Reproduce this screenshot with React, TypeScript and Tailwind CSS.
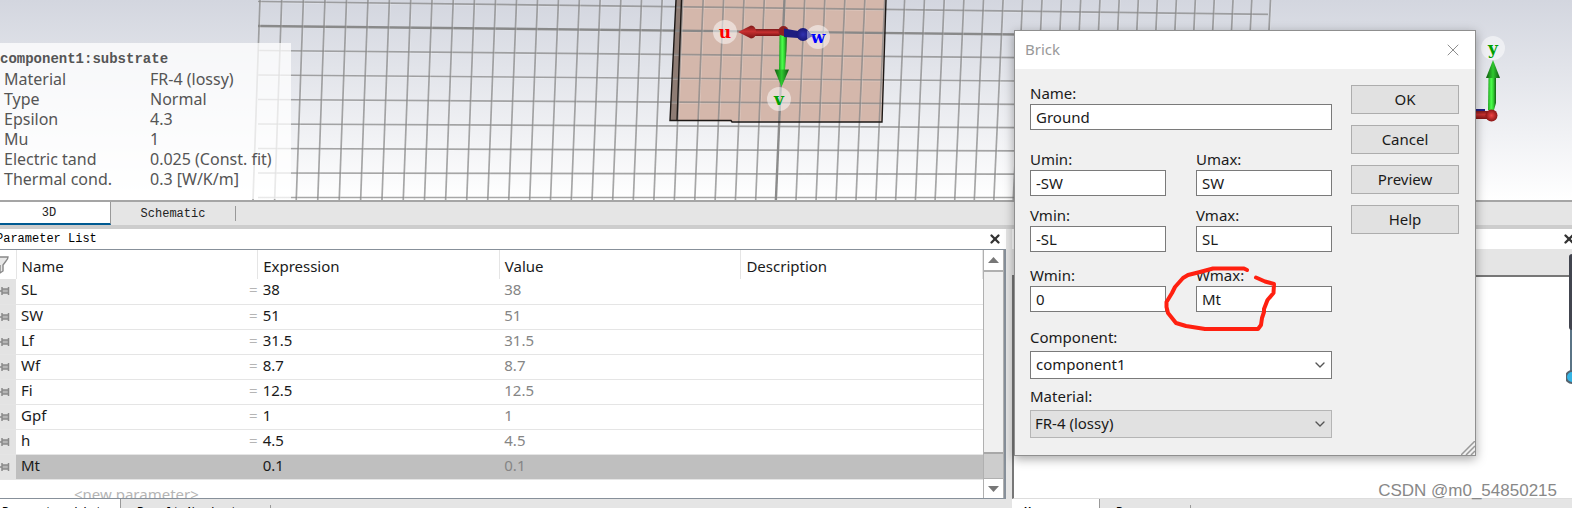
import { ChevronDown, X } from 'lucide-react';
import type { ReactNode } from 'react';

interface Parameter {
  name: string;
  value: string;
  selected?: boolean;
}

const PARAMETERS: Parameter[] = [
  { name: 'SL', value: '38' },
  { name: 'SW', value: '51' },
  { name: 'Lf', value: '31.5' },
  { name: 'Wf', value: '8.7' },
  { name: 'Fi', value: '12.5' },
  { name: 'Gpf', value: '1' },
  { name: 'h', value: '4.5' },
  { name: 'Mt', value: '0.1', selected: true },
];

const MATERIAL_INFO = [
  ['Material', 'FR-4 (lossy)'],
  ['Type', 'Normal'],
  ['Epsilon', '4.3'],
  ['Mu', '1'],
  ['Electric tand', '0.025 (Const. fit)'],
  ['Thermal cond.', '0.3 [W/K/m]'],
];

// working plane in perspective: 50 columns, rows converge to the right
const columns = [...Array(51)].map((_, i) => ({
  top: 260 + 21.75 * i - 0.0308 * i * i,
  bottom: 253 + 21.68 * i - 0.0306 * i * i,
  axis: i === 25,
}));

const rows = [...Array(9)].map((_, k) => ({
  left: 197.5 - 24.5 * k,
  right: 197.5 - 22.9 * k,
  axis: k === 7,
}));

function AxisLabel({ x, y, color, children }: { x: number; y: number; color: string; children: string }) {
  return (
    <>
      <circle cx={x} cy={y} r="12" fill="#fff" fillOpacity="0.5" />
      <text
        x={x}
        y={y + 6}
        textAnchor="middle"
        fill={color}
        className="font-['DejaVu_Serif','Liberation_Serif',serif] text-[17px] font-bold"
      >
        {children}
      </text>
    </>
  );
}

function Scene() {
  return (
    <svg width="1572" height="200" viewBox="0 0 1572 200" className="block max-w-none" aria-hidden="true">
      <defs>
        <linearGradient id="green" x1="0" x2="1" y1="0" y2="0">
          <stop offset="0" stopColor="#1fa01f" />
          <stop offset="0.4" stopColor="#4dff4d" />
          <stop offset="0.65" stopColor="#35d835" />
          <stop offset="1" stopColor="#145c14" />
        </linearGradient>
        <linearGradient id="greenHead" x1="0" x2="1" y1="0" y2="0">
          <stop offset="0" stopColor="#0f5a0f" />
          <stop offset="0.5" stopColor="#2fc92f" />
          <stop offset="1" stopColor="#125012" />
        </linearGradient>
        <linearGradient id="red" x1="0" x2="0" y1="0" y2="1">
          <stop offset="0" stopColor="#7c1a1a" />
          <stop offset="0.45" stopColor="#c93030" />
          <stop offset="1" stopColor="#7c1515" />
        </linearGradient>
        <radialGradient id="redBall">
          <stop offset="0" stopColor="#f04444" />
          <stop offset="1" stopColor="#8a1616" />
        </radialGradient>
        <radialGradient id="blueBall">
          <stop offset="0" stopColor="#3030b0" />
          <stop offset="1" stopColor="#1a1a78" />
        </radialGradient>
      </defs>

      <polygon points="676,0 682,0 677,121 670,121" fill="#8e7c74" />
      <polygon points="682,0 886,0 882,122 677,121" fill="#d4b7ab" />

      {rows.map((r, k) => (
        <g key={k}>
          <line x1="258" y1={r.left + 1} x2="1268" y2={r.right + 1} stroke="#fff" strokeOpacity="0.25" />
          <line
            x1="258"
            y1={r.left}
            x2="1268"
            y2={r.right}
            stroke="#858585"
            strokeOpacity={r.axis ? 0.95 : 0.72}
            strokeWidth={r.axis ? 2.4 : 1.7}
          />
        </g>
      ))}
      {columns.map((c, i) => (
        <g key={i}>
          <line x1={c.top + 1} y1="0" x2={c.bottom + 1} y2="200" stroke="#fff" strokeOpacity="0.25" />
          <line
            x1={c.top}
            y1="0"
            x2={c.bottom}
            y2="200"
            stroke="#858585"
            strokeOpacity={c.axis ? 0.95 : 0.72}
            strokeWidth={c.axis ? 2.4 : 1.7}
          />
        </g>
      ))}

      <path d="M676 0L670 120.5H731L732 122H882L886 0M681.5 0L677 121" fill="none" stroke="#1c1816" strokeWidth="1.4" />

      {/* local u/v/w axes */}
      <AxisLabel x={725} y={32} color="#ff0000">u</AxisLabel>
      <AxisLabel x={818} y={37} color="#0000ff">w</AxisLabel>
      <AxisLabel x={779} y={99} color="#00a000">v</AxisLabel>
      <rect x="754" y="29" width="27" height="7" fill="url(#red)" />
      <path d="M738 32L751 25.5Q756 26 756 32T751 38.5Z" fill="url(#red)" />
      <path d="M779.500 35H787L786.500 50L785 70H779Z" fill="url(#green)" />
      <path d="M774.500 69.500H789L781.500 87Z" fill="url(#greenHead)" />
      <circle cx="783.500" cy="31" r="5" fill="#8e2020" />
      <path d="M784 28.500L798 31V38L784 37Z" fill="#1d1d80" />
      <circle cx="803" cy="34.500" r="6.500" fill="url(#blueBall)" />
      <path d="M807 30L813 36L807 39Z" fill="#7878b8" />

      {/* global axes */}
      <AxisLabel x={1493} y={48} color="#00a000">y</AxisLabel>
      <rect x="1470" y="109" width="15" height="6" fill="#202080" />
      <rect x="1470" y="111" width="20" height="8" fill="url(#red)" />
      <path d="M1488.500 77H1496V103L1494 110H1488Z" fill="url(#green)" />
      <path d="M1493 60L1500 78H1486Z" fill="url(#greenHead)" />
      <circle cx="1491.500" cy="115.500" r="6" fill="url(#redBall)" />
    </svg>
  );
}

function FilterIcon() {
  return (
    <svg width="9" height="18" viewBox="0 0 9 18" aria-hidden="true">
      <path d="M-7 1H8Q8 3 6 5L3 9V15L0 17V9" fill="#e8e8e8" stroke="#888" strokeWidth="1.4" />
    </svg>
  );
}

function PinIcon() {
  return (
    <svg width="11" height="10" viewBox="0 0 11 10" aria-hidden="true">
      <rect x="2" y="3" width="6" height="4" fill="#b5b5b5" />
      <path d="M0 5H2M2 1V9M8.500 1V9M2 3H9M2 7H9" fill="none" stroke="#8a8a8a" strokeWidth="1.500" />
    </svg>
  );
}

function ParameterTable() {
  return (
    <table className="w-full table-fixed border-collapse text-left text-[15px] leading-5 text-[#1a1a1a]">
      <colgroup>
        <col className="w-4" />
        <col />
        <col />
        <col />
        <col />
      </colgroup>
      <thead>
        <tr className="h-[29px]">
          <th className="border-r border-[#e5e5e5] p-0">
            <FilterIcon />
          </th>
          {['Name', 'Expression', 'Value', 'Description'].map((title) => (
            <th key={title} className="border-r border-[#e5e5e5] px-[5px] pt-0.5 pb-0 font-normal">
              {title}
            </th>
          ))}
        </tr>
      </thead>
      <tbody>
        {PARAMETERS.map((p) => (
          <tr key={p.name} className={`h-[25px] border-b border-[#e5e5e5] ${p.selected ? 'bg-[#bfbfbf]' : ''}`}>
            <td className="bg-[#e3e3e3] p-0">
              <PinIcon />
            </td>
            <td className="pt-0 pr-0 pb-1 pl-[5px]">
              <div className="flex justify-between">
                <span>{p.name}</span>
                {!p.selected && <span className="text-[#b5b5b5]">=</span>}
              </div>
            </td>
            <td className="px-[5px] pt-0 pb-1">{p.value}</td>
            <td className="px-[5px] pt-0 pb-1 text-[#858585]">{p.value}</td>
            <td className="p-0" />
          </tr>
        ))}
        <tr>
          <td />
          <td colSpan={4} className="pt-1 pb-0 pl-[58px] text-[#b5b5b5]">
            &lt;new parameter&gt;
          </td>
        </tr>
      </tbody>
    </table>
  );
}

function ScrollBar() {
  return (
    <div className="flex w-[21px] shrink-0 flex-col border-x border-[#b0b0b0] bg-[#f0f0f0]">
      <button type="button" aria-label="Scroll up" className="flex h-[22px] items-center justify-center border-b-2 border-[#b0b0b0] bg-white">
        <svg width="11" height="6" viewBox="0 0 11 6"><path d="M0 6L5.500 0L11 6Z" fill="#777" /></svg>
      </button>
      <div className="flex-1" />
      <div className="h-[26px] border-t-2 border-[#a8a8a8] bg-[#cdcdcd]" />
      <button type="button" aria-label="Scroll down" className="flex h-5 items-center justify-center border-t border-[#b0b0b0] bg-white">
        <svg width="11" height="6" viewBox="0 0 11 6"><path d="M0 0L5.500 6L11 0Z" fill="#777" /></svg>
      </button>
    </div>
  );
}

function DialogField({ id, label, value }: { id: string; label: string; value: string }) {
  return (
    <div className="min-w-0 flex-1">
      <label htmlFor={id} className="block pb-0.5 leading-[18px]">
        {label}
      </label>
      <input
        id={id}
        defaultValue={value}
        className="block h-[26px] w-full border border-[#7a7a7a] bg-white px-[5px] pb-px outline-none"
      />
    </div>
  );
}

function DialogSelect({ id, label, value, className }: { id: string; label: string; value: string; className: string }) {
  return (
    <div>
      <label htmlFor={id} className="mb-0.5 block leading-6">
        {label}
      </label>
      <div className="relative">
        <select id={id} className={`block h-7 w-full appearance-none border pb-0.5 outline-none ${className}`}>
          <option>{value}</option>
        </select>
        <ChevronDown className="pointer-events-none absolute top-1.5 right-1 size-4 text-[#555]" strokeWidth={2} />
      </div>
    </div>
  );
}

function BrickDialog() {
  return (
    <section
      role="dialog"
      aria-label="Brick"
      className="absolute top-[30px] right-24 w-[462px] border border-[#8f8f8f] bg-[#f0f0f0] font-['Noto_Sans',sans-serif] text-[15px] text-[#1a1a1a] shadow-[0_3px_10px_rgba(0,0,0,0.35)]"
    >
      <header className="flex h-[38px] items-center justify-between bg-white pr-[14px] pb-px pl-2.5 text-[#999]">
        <h2>Brick</h2>
        <button type="button" aria-label="Close">
          <X className="size-4 scale-125 text-[#777]" strokeWidth={1} />
        </button>
      </header>
      <div className="flex gap-[19px] pt-[15px] pr-4 pb-[17px] pl-[15px]">
        <form className="flex-1">
          <DialogField id="name" label="Name:" value="Ground" />
          <div className="mt-5 flex gap-[30px]">
            <DialogField id="umin" label="Umin:" value="-SW" />
            <DialogField id="umax" label="Umax:" value="SW" />
          </div>
          <div className="mt-2.5 flex gap-[30px]">
            <DialogField id="vmin" label="Vmin:" value="-SL" />
            <DialogField id="vmax" label="Vmax:" value="SL" />
          </div>
          <div className="mt-[14px] mb-[13px] flex gap-[30px]">
            <DialogField id="wmin" label="Wmin:" value="0" />
            <DialogField id="wmax" label="Wmax:" value="Mt" />
          </div>
          <div className="flex flex-col gap-[5px]">
            <DialogSelect id="component" label="Component:" value="component1" className="border-[#7a7a7a] bg-white px-[5px]" />
            <DialogSelect id="material" label="Material:" value="FR-4 (lossy)" className="border-[#b5b5b5] bg-[#e1e1e1] px-1" />
          </div>
        </form>
        <div className="flex w-[108px] flex-col gap-[11px] pt-px">
          {['OK', 'Cancel', 'Preview', 'Help'].map((action) => (
            <button key={action} type="button" className="h-[29px] border border-[#adadad] bg-[#e1e1e1]">
              {action}
            </button>
          ))}
        </div>
      </div>
      <svg width="14" height="14" viewBox="0 0 14 14" className="absolute right-0 bottom-0" aria-hidden="true">
        <path d="M0 14L14 0M5 14L14 5M10 14L14 10" stroke="#999" strokeWidth="1.500" />
      </svg>
    </section>
  );
}

function PanelTab({ active, className, children }: { active?: boolean; className: string; children: ReactNode }) {
  return (
    <button
      type="button"
      className={`h-full whitespace-nowrap text-left ${active ? 'border-r border-[#999] bg-white' : ''} ${className}`}
    >
      {children}
    </button>
  );
}

export default function App() {
  return (
    <main className="relative h-screen overflow-hidden bg-[#e5e5e5] font-['Noto_Sans',sans-serif]">
      <section className="relative h-50 overflow-hidden bg-linear-to-b from-[#d3d6df] to-white">
        <Scene />
        <div className="absolute top-[43px] left-0 w-[291px] bg-white/75 pt-1 pb-2.5 text-[16px] leading-5 text-[#555]">
          <h2 className="pt-0.5 font-['Liberation_Mono',monospace] text-[14px] font-bold">component1:substrate</h2>
          <dl className="grid grid-cols-[146px_1fr] pl-1">
            {MATERIAL_INFO.map(([term, detail]) => (
              <div key={term} className="contents">
                <dt>{term}</dt>
                <dd className="whitespace-nowrap">{detail}</dd>
              </div>
            ))}
          </dl>
        </div>
      </section>

      <nav className="flex h-[29px] items-stretch border-t-2 border-b-4 border-t-[#a5a5a5] border-b-[#cdcdcd] font-['Liberation_Mono',monospace] text-[12px] text-[#222]">
        <button type="button" className="w-[111px] border-r border-b-2 border-r-[#999] border-b-[#005a92] bg-white pr-3">
          3D
        </button>
        <button type="button" className="w-[124px]">Schematic</button>
        <span className="my-1 w-px bg-[#999]" />
      </nav>

      <div className="flex gap-1.5">
        <section className="w-[64%]">
          <header className="flex h-5 items-center justify-between bg-white pr-1 font-['Liberation_Mono',monospace] text-[12px]">
            <h2 className="-ml-1">Parameter List</h2>
            <button type="button" aria-label="Close parameter list">
              <X className="size-3.5 text-[#333]" strokeWidth={4} />
            </button>
          </header>
          <div className="flex h-[250px] overflow-hidden border-t border-r-2 border-b border-[#87909a] bg-white">
            <div className="min-w-0 flex-1">
              <ParameterTable />
            </div>
            <ScrollBar />
          </div>
          <nav className="flex h-7 font-['Liberation_Mono',monospace] text-[12px]">
            <PanelTab active className="w-[121px] pl-0.5">Parameter List</PanelTab>
            <PanelTab className="w-[149px] pl-4">Result Navigator</PanelTab>
            <span className="my-1.5 w-px bg-[#999]" />
          </nav>
        </section>

        <section className="min-w-0 flex-1">
          <header className="flex h-5 items-center justify-end overflow-hidden bg-white">
            <button type="button" aria-label="Close messages" className="-mr-1">
              <X className="size-3.5 text-[#333]" strokeWidth={4} />
            </button>
          </header>
          <div className="h-[26px]" />
          <div className="h-56 border-t-2 border-b border-l-2 border-t-[#777] border-b-[#ddd] border-l-[#777] bg-white" />
          <nav className="flex h-7 font-['Liberation_Mono',monospace] text-[12px]">
            <PanelTab active className="w-[88px] pl-3">Messages</PanelTab>
            <PanelTab className="w-[90px] pl-4">Progress</PanelTab>
            <span className="my-1.5 w-px bg-[#999]" />
          </nav>
        </section>
      </div>

      <BrickDialog />

      {/* hand-drawn mark round Wmax */}
      <svg width="120" height="72" viewBox="1160 262 120 72" className="pointer-events-none absolute top-[262px] right-[292px]" aria-hidden="true">
        <path
          d="M1247 270L1244 268.500H1213L1200 272L1188 275L1183 278L1175 287L1172 293L1166.500 302V307L1168 313L1176 323L1186 326L1205 329H1258L1261 325L1262 318L1264 312V309L1267.500 300L1273.500 293L1274 284L1265 281.500L1256 277.500"
          fill="none"
          stroke="#ff2010"
          strokeWidth="4"
          strokeLinecap="round"
          strokeLinejoin="round"
        />
      </svg>

      {/* edge slider */}
      <svg width="6" height="132" viewBox="0 0 6 132" className="absolute top-[254px] right-0" aria-hidden="true">
        <rect x="4" y="70" width="4" height="50" fill="#5a7486" />
        <rect x="3" y="0" width="8" height="76" rx="3" fill="#42454f" />
        <circle cx="6" cy="123" r="6" fill="#35b5e5" stroke="#56636e" strokeWidth="2" />
      </svg>

      <p className="absolute right-[15px] bottom-[7px] font-['Liberation_Sans',sans-serif] text-[17px] leading-5 text-[#888]">
        CSDN @m0_54850215
      </p>
    </main>
  );
}
